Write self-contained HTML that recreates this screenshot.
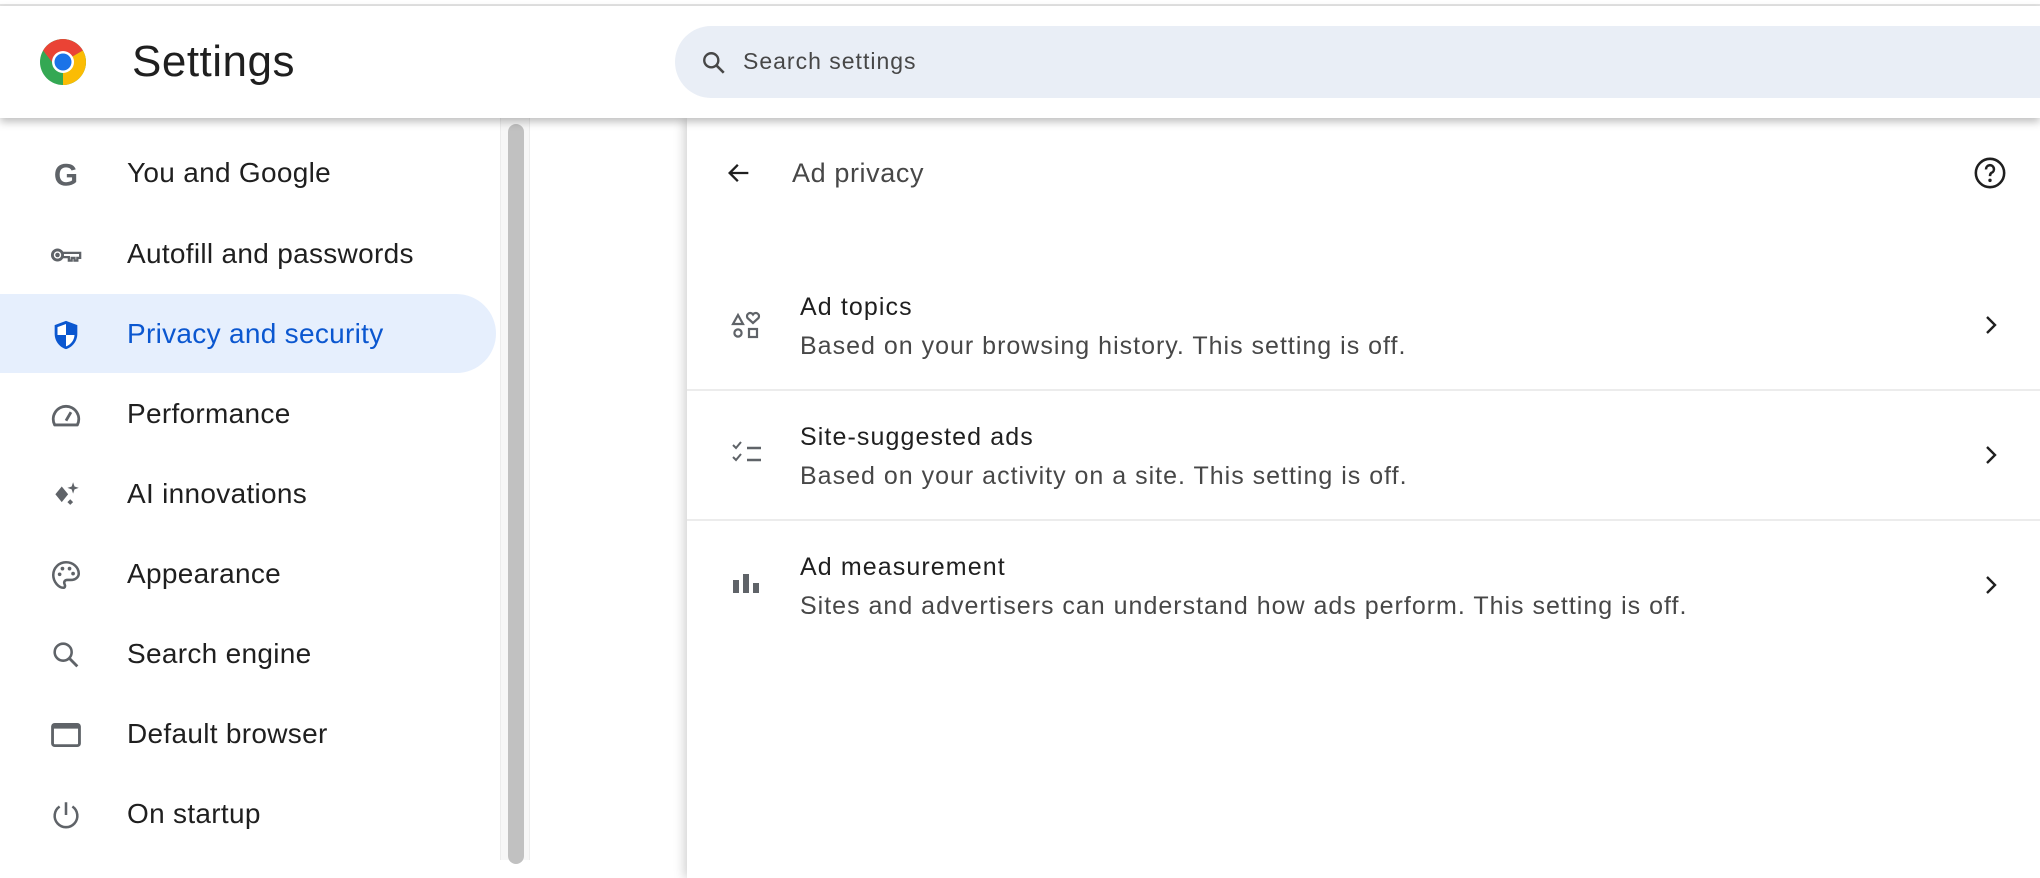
<!DOCTYPE html>
<html><head><meta charset="utf-8"><style>
*{margin:0;padding:0;box-sizing:border-box}
body{width:2040px;height:860px;overflow:hidden;background:#fff;font-family:"Liberation Sans",Arial,sans-serif;position:relative}
.abs{position:absolute}
.topline{left:0;top:4px;width:2040px;height:2px;background:#e4e4e4}
.header{left:0;top:6px;width:2040px;height:112px;background:#fff;z-index:5;box-shadow:0 4px 8px rgba(0,0,0,.25)}
.title{left:132px;top:37px;font-size:44px;color:#1f1f1f;z-index:6;letter-spacing:0.5px}
.search{left:675px;top:26px;width:1400px;height:72px;border-radius:36px;background:#e9eef6;z-index:6}
.search span{position:absolute;left:68px;top:22px;font-size:23px;color:#474747;letter-spacing:1px}
.nav{left:0;width:500px;height:80px}
.nav .t{position:absolute;left:127px;top:24px;font-size:28px;color:#1f1f1f;letter-spacing:0.3px}
.nav svg{position:absolute;left:49px;top:24px}
.sel{background:#e6effd;border-radius:0 40px 40px 0;width:496px;height:79px}
.sel .t{color:#0b57d0}
.track{left:500px;top:118px;width:30px;height:742px;background:#f7f7f7;border-left:1px solid #ececec;border-right:1px solid #ececec}
.thumb{left:508px;top:124px;width:16px;height:740px;background:#c1c1c1;border-radius:8px}
.card{left:687px;top:118px;width:1400px;height:760px;background:#fff;box-shadow:-3px 0 10px rgba(0,0,0,.18)}
.row{left:687px;width:1353px;height:130px}
.row .h{position:absolute;left:113px;font-size:25px;color:#1f1f1f;letter-spacing:1.1px}
.row .s{position:absolute;left:113px;font-size:25px;color:#474747;letter-spacing:1px}
.sep{left:687px;width:1353px;height:2px;background:#ececec}
</style></head><body>
<div class="abs topline"></div>
<div class="abs header"></div>
<svg class="abs" style="left:40px;top:39px;z-index:6" width="46" height="46" viewBox="0 0 46 46">
<circle cx="23" cy="23" r="23" fill="#34a853"/>
<path d="M23 23 L3.1 11.5 A23 23 0 0 1 42.9 11.5 Z" fill="#ea4335"/>
<path d="M23 23 L42.9 11.5 A23 23 0 0 1 23 46 Z" fill="#fbbc04"/>
<path d="M23 23 L3.1 11.5 L12 23 Z" fill="#ea4335"/>
<circle cx="23" cy="23" r="11" fill="#fff"/>
<circle cx="23" cy="23" r="8.5" fill="#1a73e8"/>
</svg>
<div class="abs title">Settings</div>
<div class="abs search">
<svg style="position:absolute;left:26px;top:24px" width="26" height="26" viewBox="0 0 24 24"><circle cx="9.5" cy="9.5" r="6.5" fill="none" stroke="#474747" stroke-width="2.2"/><path d="M14.5 14.5 L21 21" stroke="#474747" stroke-width="2.4"/></svg>
<span>Search settings</span></div>

<div class="abs nav" style="top:133px"><svg width="34" height="34" viewBox="0 0 24 24"><text x="12" y="20" text-anchor="middle" font-family="Liberation Sans" font-weight="bold" font-size="22" fill="#5f6368">G</text></svg><div class="t">You and Google</div></div>
<div class="abs nav" style="top:214px"><svg width="34" height="34" viewBox="0 0 24 24"><circle cx="6" cy="12" r="3.6" fill="none" stroke="#5f6368" stroke-width="2"/><path d="M9.5 10.5H22V14H20V16H18V14H16V16H14V13.5H9.5" fill="none" stroke="#5f6368" stroke-width="1.6"/><circle cx="6" cy="12" r="1.6" fill="#5f6368"/></svg><div class="t">Autofill and passwords</div></div>
<div class="abs nav sel" style="top:294px"><svg width="34" height="34" viewBox="0 0 24 24"><path d="M12 2 L20 5 V11 C20 16.5 16.5 20.5 12 22 C7.5 20.5 4 16.5 4 11 V5 Z" fill="#0b57d0"/><path d="M12 4.2 V12 H18 C17.8 15.8 15.4 18.8 12 20 V12 H6 V6.4 Z" fill="#fff"/></svg><div class="t">Privacy and security</div></div>
<div class="abs nav" style="top:374px"><svg width="34" height="34" viewBox="0 0 24 24"><path d="M4 19 A9 9 0 1 1 20 19 Z" fill="none" stroke="#5f6368" stroke-width="2" stroke-linejoin="round"/><path d="M12 16 L15.5 10" stroke="#5f6368" stroke-width="2"/></svg><div class="t">Performance</div></div>
<div class="abs nav" style="top:454px"><svg width="34" height="34" viewBox="0 0 24 24"><path d="M9 6 L13.5 11.5 L9 17 L4.5 11.5 Z" fill="#5f6368"/><path d="M17 3 L18 6 L21 7 L18 8 L17 11 L16 8 L13 7 L16 6 Z" fill="#5f6368"/><path d="M15 15 L17 17 L15 19 L13 17 Z" fill="#5f6368"/></svg><div class="t">AI innovations</div></div>
<div class="abs nav" style="top:534px"><svg width="34" height="34" viewBox="0 0 24 24"><path d="M12 3 C7 3 3 7 3 12 C3 17 7 21 10 21 C11.5 21 11.5 19.5 11 18.5 C10.3 17 11 15.5 13 15.5 H15.5 C18.5 15.5 21 13.5 21 11 C21 6.5 17 3 12 3 Z" fill="none" stroke="#5f6368" stroke-width="1.8"/><circle cx="7.5" cy="11.5" r="1.3" fill="#5f6368"/><circle cx="9.5" cy="7.5" r="1.3" fill="#5f6368"/><circle cx="14.5" cy="7.5" r="1.3" fill="#5f6368"/><circle cx="17" cy="11" r="1.3" fill="#5f6368"/></svg><div class="t">Appearance</div></div>
<div class="abs nav" style="top:614px"><svg width="34" height="34" viewBox="0 0 24 24"><circle cx="10" cy="10" r="6" fill="none" stroke="#5f6368" stroke-width="1.8"/><path d="M14.5 14.5 L20 20" stroke="#5f6368" stroke-width="2"/></svg><div class="t">Search engine</div></div>
<div class="abs nav" style="top:694px"><svg width="34" height="34" viewBox="0 0 24 24"><rect x="2.5" y="4.5" width="19" height="15" rx="1.5" fill="none" stroke="#5f6368" stroke-width="2"/><rect x="2.5" y="4.5" width="19" height="3" fill="#5f6368"/></svg><div class="t">Default browser</div></div>
<div class="abs nav" style="top:774px"><svg width="34" height="34" viewBox="0 0 24 24"><path d="M12 3 V12" stroke="#5f6368" stroke-width="1.8"/><path d="M7.5 6 A8 8 0 1 0 16.5 6" fill="none" stroke="#5f6368" stroke-width="1.8"/></svg><div class="t">On startup</div></div>

<div class="abs track"></div>
<div class="abs thumb"></div>
<div class="abs card"></div>

<svg class="abs" style="left:725px;top:159px" width="28" height="28" viewBox="0 0 24 24"><path d="M20 12 H5 M11 5 L4 12 L11 19" fill="none" stroke="#1f1f1f" stroke-width="2"/></svg>
<div class="abs" style="left:792px;top:158px;font-size:27px;color:#474747;letter-spacing:0.6px">Ad privacy</div>
<svg class="abs" style="left:1973px;top:156px" width="34" height="34" viewBox="0 0 24 24"><circle cx="12" cy="12" r="10" fill="none" stroke="#1f1f1f" stroke-width="1.8"/><path d="M9.2 9.5 A2.8 2.8 0 1 1 13 11.9 C12.2 12.4 12 13 12 14.2" fill="none" stroke="#1f1f1f" stroke-width="1.8"/><circle cx="12" cy="17.2" r="1.2" fill="#1f1f1f"/></svg>

<div class="abs row" style="top:260px">
<svg style="position:absolute;left:44px;top:49px" width="34" height="34" viewBox="0 0 34 34"><path d="M2 15 L7 6 L12 15 Z" fill="none" stroke="#5f6368" stroke-width="2.2"/><path d="M22 14 L16.5 9 A3 3 0 0 1 22 5.5 A3 3 0 0 1 27.5 9 Z" fill="none" stroke="#5f6368" stroke-width="2.2"/><circle cx="7" cy="24" r="3.6" fill="none" stroke="#5f6368" stroke-width="2.2"/><rect x="18" y="20" width="8" height="8" fill="none" stroke="#5f6368" stroke-width="2.2"/></svg>
<div class="h" style="top:33px">Ad topics</div>
<div class="s" style="top:72px">Based on your browsing history. This setting is off.</div>
<svg style="position:absolute;left:1292px;top:53px" width="24" height="24" viewBox="0 0 24 24"><path d="M8 4 L16 12 L8 20" fill="none" stroke="#1f1f1f" stroke-width="2.4"/></svg>
</div>
<div class="abs sep" style="top:389px"></div>
<div class="abs row" style="top:390px">
<svg style="position:absolute;left:44px;top:48px" width="34" height="34" viewBox="0 0 34 34"><path d="M2 7 L5 10 L10 4 M2 19 L5 22 L10 16" fill="none" stroke="#5f6368" stroke-width="2"/><path d="M16 10 H30 M16 22 H30" stroke="#5f6368" stroke-width="2.4"/></svg>
<div class="h" style="top:33px">Site-suggested ads</div>
<div class="s" style="top:72px">Based on your activity on a site. This setting is off.</div>
<svg style="position:absolute;left:1292px;top:53px" width="24" height="24" viewBox="0 0 24 24"><path d="M8 4 L16 12 L8 20" fill="none" stroke="#1f1f1f" stroke-width="2.4"/></svg>
</div>
<div class="abs sep" style="top:519px"></div>
<div class="abs row" style="top:520px">
<svg style="position:absolute;left:44px;top:50px" width="34" height="34" viewBox="0 0 34 34"><rect x="2" y="10" width="6" height="13" fill="#5f6368"/><rect x="12" y="4" width="6" height="19" fill="#5f6368"/><rect x="22" y="13" width="6" height="10" fill="#5f6368"/></svg>
<div class="h" style="top:33px">Ad measurement</div>
<div class="s" style="top:72px">Sites and advertisers can understand how ads perform. This setting is off.</div>
<svg style="position:absolute;left:1292px;top:53px" width="24" height="24" viewBox="0 0 24 24"><path d="M8 4 L16 12 L8 20" fill="none" stroke="#1f1f1f" stroke-width="2.4"/></svg>
</div>
</body></html>
